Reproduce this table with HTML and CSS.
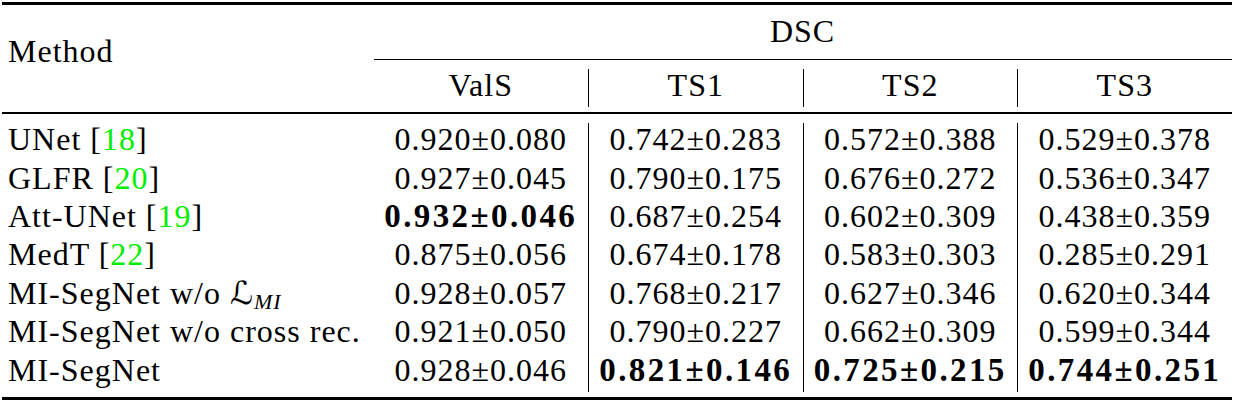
FILE: index.html
```html
<!DOCTYPE html>
<html lang="en">
<head>
<meta charset="utf-8">
<title>Table</title>
<link rel="stylesheet" href="styles.css">
</head>
<body>
<table class="tbl">
  <colgroup>
    <col class="c-name">
    <col class="c-val">
    <col class="c-val">
    <col class="c-val">
    <col class="c-val">
  </colgroup>
  <thead>
    <tr class="h1">
      <th class="method" rowspan="2"><div class="in">Method</div></th>
      <th class="dsc" colspan="4"><div class="in">DSC</div></th>
    </tr>
    <tr class="h2">
      <th><div class="in">ValS</div></th>
      <th class="sep"><div class="in">TS1</div></th>
      <th class="sep"><div class="in">TS2</div></th>
      <th class="sep"><div class="in">TS3</div></th>
    </tr>
  </thead>
  <tbody>
    <tr>
      <td class="name"><div class="in">UNet [<span class="cite">18</span>]</div></td>
      <td><div class="in">0.920±0.080</div></td>
      <td class="sep"><div class="in">0.742±0.283</div></td>
      <td class="sep"><div class="in">0.572±0.388</div></td>
      <td class="sep"><div class="in">0.529±0.378</div></td>
    </tr>
    <tr>
      <td class="name"><div class="in">GLFR [<span class="cite">20</span>]</div></td>
      <td><div class="in">0.927±0.045</div></td>
      <td class="sep"><div class="in">0.790±0.175</div></td>
      <td class="sep"><div class="in">0.676±0.272</div></td>
      <td class="sep"><div class="in">0.536±0.347</div></td>
    </tr>
    <tr>
      <td class="name"><div class="in">Att-UNet [<span class="cite">19</span>]</div></td>
      <td><div class="in"><span class="b">0.932±0.046</span></div></td>
      <td class="sep"><div class="in">0.687±0.254</div></td>
      <td class="sep"><div class="in">0.602±0.309</div></td>
      <td class="sep"><div class="in">0.438±0.359</div></td>
    </tr>
    <tr>
      <td class="name"><div class="in">MedT [<span class="cite">22</span>]</div></td>
      <td><div class="in">0.875±0.056</div></td>
      <td class="sep"><div class="in">0.674±0.178</div></td>
      <td class="sep"><div class="in">0.583±0.303</div></td>
      <td class="sep"><div class="in">0.285±0.291</div></td>
    </tr>
    <tr>
      <td class="name"><div class="in">MI-SegNet w/o <span class="cal">ℒ</span><span class="sub">MI</span></div></td>
      <td><div class="in">0.928±0.057</div></td>
      <td class="sep"><div class="in">0.768±0.217</div></td>
      <td class="sep"><div class="in">0.627±0.346</div></td>
      <td class="sep"><div class="in">0.620±0.344</div></td>
    </tr>
    <tr>
      <td class="name"><div class="in">MI-SegNet w/o cross rec.</div></td>
      <td><div class="in">0.921±0.050</div></td>
      <td class="sep"><div class="in">0.790±0.227</div></td>
      <td class="sep"><div class="in">0.662±0.309</div></td>
      <td class="sep"><div class="in">0.599±0.344</div></td>
    </tr>
    <tr>
      <td class="name"><div class="in">MI-SegNet</div></td>
      <td><div class="in">0.928±0.046</div></td>
      <td class="sep"><div class="in"><span class="b">0.821±0.146</span></div></td>
      <td class="sep"><div class="in"><span class="b">0.725±0.215</span></div></td>
      <td class="sep"><div class="in"><span class="b">0.744±0.251</span></div></td>
    </tr>
  </tbody>
</table>
</body>
</html>
```

FILE: styles.css
```css
html, body {
  margin: 0;
  padding: 0;
  background: #ffffff;
}

body {
  color: #000000;
  font-family: "Liberation Serif", "Times New Roman", serif;
  font-size: 32px;
}

.tbl {
  margin: 2px 0 0 2px;
  border-collapse: separate;
  border-spacing: 0;
  table-layout: fixed;
  width: 1229.5px;
  border-top: 3px solid #000;
  border-bottom: 3px solid #000;
  letter-spacing: 1px;
  font-family: "Liberation Serif", "Times New Roman", serif;
  font-size: 32px;
}

.c-name { width: 371.5px; }
.c-val { width: 214.5px; }

.tbl th,
.tbl td {
  padding: 0;
  font-weight: 400;
  text-align: center;
  vertical-align: top;
}

.in {
  height: 38.4px;
  line-height: 32.8px;
  white-space: nowrap;
  box-sizing: border-box;
}

.sep .in {
  border-left: 1px solid #000;
}

.tbl .method {
  text-align: left;
  padding: 29.5px 0 0 6px;
  border-bottom: 2px solid #000;
}

.tbl .dsc {
  padding: 9.5px 0 6px;
  border-bottom: 1px solid #000;
}

.tbl .h2 th {
  padding: 9px 0 5px;
  border-bottom: 2px solid #000;
}

.tbl tbody tr:first-child td { padding-top: 9px; }
.tbl tbody tr:last-child td { padding-bottom: 5px; }

.tbl td.name {
  text-align: left;
  padding-left: 6px;
}

.cite { color: #00ee00; }

.b {
  font-weight: 700;
  font-size: 33px;
  letter-spacing: 2.4px;
}

.cal {
  font-family: "DejaVu Serif", "DejaVu Sans", serif;
  font-style: italic;
  letter-spacing: 0;
  margin-right: 1px;
}

.sub {
  font-style: italic;
  font-size: 22px;
  vertical-align: -5px;
  letter-spacing: 1px;
}
```
